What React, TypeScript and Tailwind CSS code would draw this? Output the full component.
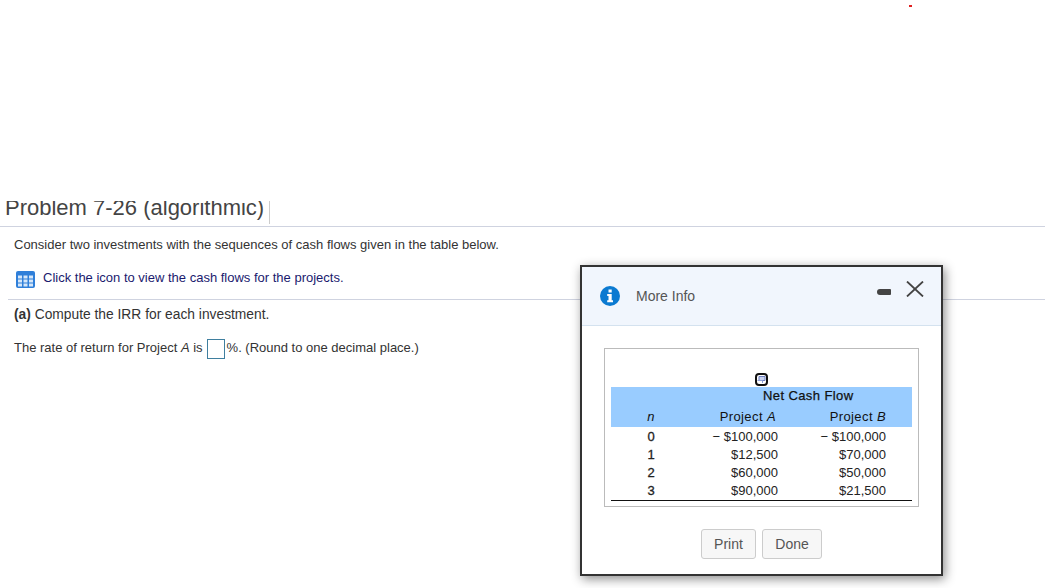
export default function App() {
  const rows = [
    ["0", "− $100,000", "− $100,000", "h-[19px] leading-[19px]"],
    ["1", "$12,500", "$70,000", "h-[18px] leading-[18px]"],
    ["2", "$60,000", "$50,000", "h-[18px] leading-[18px]"],
    ["3", "$90,000", "$21,500", "h-[18px] leading-[18px]"],
  ];
  return (
    <div className="relative w-[1045px] h-[588px] overflow-hidden bg-white text-[#333] font-['Liberation_Sans',Arial,sans-serif]">
      <div className="absolute left-[909px] top-[5px] w-[3px] h-[2px] bg-[#e02020]" />

      <div className="pt-[201px]">
        <div className="h-[26px] border-b border-[#cfd3e0] overflow-hidden">
          <div className="h-[23px] w-[270px] border-r border-[#ccc] overflow-hidden pl-[5px]">
            <div className="text-[22px] leading-[22px] -mt-[4px] text-[#444] whitespace-nowrap">Problem 7-26 (algorithmic)</div>
          </div>
        </div>
        <div className="pl-[14px] pt-[10px] text-[13px] leading-[16px]">
          Consider two investments with the sequences of cash flows given in the table below.
        </div>
        <div className="pl-[16px] pt-[17px] h-[46px] flex items-start gap-[8px] text-[13px] leading-[16px] text-[#1a1a6e]">
          <svg width="19" height="17" viewBox="0 0 19 17" className="mt-[1px]">
            <rect x="0" y="0" width="19" height="17" rx="2" fill="#2f7fd9" />
            <g fill="#d6e7f9">
              <rect x="2" y="4.5" width="4" height="3" />
              <rect x="7.5" y="4.5" width="4" height="3" />
              <rect x="13" y="4.5" width="4" height="3" />
              <rect x="2" y="8.5" width="4" height="3" />
              <rect x="7.5" y="8.5" width="4" height="3" />
              <rect x="13" y="8.5" width="4" height="3" />
              <rect x="2" y="12.5" width="4" height="3" />
              <rect x="7.5" y="12.5" width="4" height="3" />
              <rect x="13" y="12.5" width="4" height="3" />
            </g>
          </svg>
          <span>Click the icon to view the cash flows for the projects.</span>
        </div>
        <div className="ml-[8px] border-t border-[#cfd3e0] pl-[6px] pt-[7px] text-[13.8px] leading-[16px]">
          <b>(a)</b> Compute the IRR for each investment.
        </div>
        <div className="pl-[14px] pt-[16px] flex items-start text-[13px] leading-[18px]">
          <span>The rate of return for Project <i>A</i> is</span>
          <span className="inline-block w-[18px] h-[20px] border border-[#3f7f9f] ml-[4px] mr-[2px]" />
          <span>%. (Round to one decimal place.)</span>
        </div>
      </div>

      <div className="absolute left-[580px] top-[265px] w-[363px] h-[311px] border-2 border-[#333] bg-white shadow-[2px_3px_10px_rgba(0,0,0,0.45)] flex flex-col">
        <div className="h-[59px] bg-[#f1f6fd] border-b border-[#d4e2ef] flex items-center pl-[18px] pr-[17px]">
          <svg width="20" height="20" viewBox="0 0 20 20">
            <circle cx="10" cy="10" r="10" fill="#0b7ad1" />
            <rect x="8.5" y="3.5" width="3.2" height="3" fill="#fff" />
            <path d="M7.2 8h4.5v6.2h1.3v2H7.2v-2h1.3V10H7.2z" fill="#fff" />
          </svg>
          <span className="ml-[16px] text-[14px] text-[#555]">More Info</span>
          <div className="ml-auto flex items-start gap-[15px] -mt-[15px]">
            <span className="w-[14px] h-[6px] rounded-l-[3px] rounded-r-[1px] bg-[#444] mt-[8px]" />
            <svg width="18" height="16" viewBox="0 0 18 16" stroke="#444" strokeWidth="1.8" fill="none">
              <path d="M1 0.5 L17 15.5 M17 0.5 L1 15.5" />
            </svg>
          </div>
        </div>
        <div className="flex-1 px-[22px] pt-[22px]">
          <div className="h-[159px] w-[315px] border border-[#bbb] px-[6px] pt-[18px]">
            <div className="h-[20px] pt-[6px] flex justify-center">
              <svg width="13" height="13" viewBox="0 0 13 13">
                <rect x="1" y="1" width="11" height="11" rx="3" fill="#fff" stroke="#111" strokeWidth="2" />
                <path d="M4 3.5 H10 V7.5 H4 Z" fill="#c9d3ef" stroke="#6d7fc0" strokeWidth="1" />
                <path d="M2.5 7.5 H7.5 V10" fill="none" stroke="#8fa0d8" strokeWidth="1" />
              </svg>
            </div>
            <div className="bg-[#99ccff] h-[40px] text-[13px] text-[#111] flex flex-col">
              <div className="h-[19px] leading-[18px] pl-[152px] whitespace-nowrap tracking-[0.4px] [-webkit-text-stroke:0.25px_#111]">Net Cash Flow</div>
              <div className="grid grid-cols-[80px_85px_110px] h-[21px] leading-[21px] tracking-[0.4px]">
                <span className="text-center"><i>n</i></span>
                <span className="text-right">Project <i>A</i></span>
                <span className="text-right">Project <i>B</i></span>
              </div>
            </div>
            <div className="text-[13px] text-[#222] border-b border-[#111]">
              {rows.map((r) => (
                <div key={r[0]} className={`grid grid-cols-[80px_87px_108px] ${r[3]}`}>
                  <span className="text-center [-webkit-text-stroke:0.3px_#222]">{r[0]}</span>
                  <span className="text-right">{r[1]}</span>
                  <span className="text-right">{r[2]}</span>
                </div>
              ))}
            </div>
          </div>
          <div className="flex justify-center gap-[6px] mt-[22px]">
            <button className="w-[55px] h-[30px] rounded-[3px] border border-[#ccc] bg-[#f7f7f7] text-[14px] text-[#555]">Print</button>
            <button className="w-[60px] h-[30px] rounded-[3px] border border-[#ccc] bg-[#f7f7f7] text-[14px] text-[#555]">Done</button>
          </div>
        </div>
      </div>
    </div>
  );
}
